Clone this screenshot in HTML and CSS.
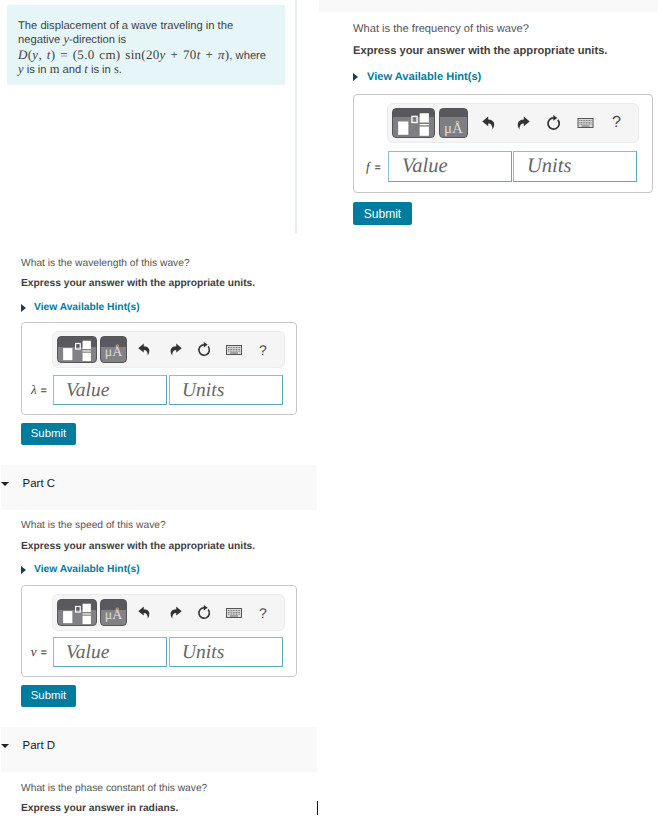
FILE: index.html
```html
<!DOCTYPE html>
<html lang="en">
<head>
  <meta charset="UTF-8">
  <meta name="viewport" content="width=device-width, initial-scale=1.0">
  <title>Wave Problem</title>
  <link rel="stylesheet" href="styles.css">
</head>
<body>

<svg class="sprite" width="0" height="0">
  <symbol id="undo" viewBox="0 0 14 14">
    <path d="M6.2 0.6 L0.3 5.6 L6.2 10.2 V7.6 C9 7.6 10.4 9.4 10.6 13.4 C13.8 8.4 12.4 3.7 6.2 3.5 Z"/>
  </symbol>
  <symbol id="redo" viewBox="0 0 14 14">
    <path d="M7.8 0.6 L13.7 5.6 L7.8 10.2 V7.6 C5 7.6 3.6 9.4 3.4 13.4 C0.2 8.4 1.6 3.7 7.8 3.5 Z"/>
  </symbol>
  <symbol id="reset" viewBox="0 0 16 16">
    <path d="M11.9 4.9 A5.6 5.6 0 1 1 7.6 2.9" fill="none" stroke="currentColor" stroke-width="1.7"/>
    <path d="M7.2 0 L11.4 3 L7.2 5.8 Z"/>
  </symbol>
  <symbol id="keyboard" viewBox="0 0 16 10">
    <rect x="0.5" y="0.5" width="15" height="9" fill="#dcdcdc" stroke="#555"/>
    <path d="M2 2.5 H14 M2 4.4 H14 M2 6.1 H14" stroke="#666" stroke-width="0.9" stroke-dasharray="1 0.6"/>
    <path d="M4 8 H12" stroke="#666"/>
  </symbol>
  <symbol id="template" viewBox="0 0 40 27">
    <rect x="5" y="12" width="10" height="13" fill="#fff"/>
    <rect x="18.5" y="7" width="5" height="6" fill="none" stroke="#fff" stroke-width="1.3"/>
    <rect x="26" y="4" width="9" height="9" fill="#fff"/>
    <rect x="26" y="14.5" width="9" height="1.2" fill="#fff"/>
    <rect x="26" y="17" width="9" height="9" fill="#fff"/>
  </symbol>
</svg>

<div class="page">
  <div class="col-left">
    <div class="intro-wrap">
      <div class="intro">
        The displacement of a wave traveling in the<br>negative <i class="math">y</i>-direction is<br>
        <span class="math formula"><i>D</i>(<i>y</i>, <i>t</i>) = (5.0 cm) sin(20<i>y</i> + 70<i>t</i> + <i>π</i>)</span>, where<br>
        <i class="math">y</i> is in <span class="math">m</span> and <i class="math">t</i> is in <span class="math">s</span>.
      </div>
    </div>

    <div class="question">
      <p class="q-text">What is the wavelength of this wave?</p>
      <p class="q-note">Express your answer with the appropriate units.</p>
      <p class="hint"><span class="hint-arrow"></span>View Available Hint(s)</p>
      <div class="answer">
        <div class="toolbar">
          <span class="tool-btn tool-template"><svg><use href="#template"/></svg></span>
          <span class="tool-btn tool-units">μÅ</span>
          <svg class="icon icon-undo"><use href="#undo"/></svg>
          <svg class="icon icon-redo"><use href="#redo"/></svg>
          <svg class="icon icon-reset"><use href="#reset"/></svg>
          <svg class="icon icon-keys"><use href="#keyboard"/></svg>
          <span class="help">?</span>
        </div>
        <div class="input-row">
          <span class="symbol"><i class="math">λ</i> =</span>
          <span class="field">Value</span>
          <span class="field">Units</span>
        </div>
      </div>
      <button class="submit">Submit</button>
    </div>

    <div class="part"><span class="part-arrow"></span>Part C</div>

    <div class="question q-tight">
      <p class="q-text">What is the speed of this wave?</p>
      <p class="q-note">Express your answer with the appropriate units.</p>
      <p class="hint"><span class="hint-arrow"></span>View Available Hint(s)</p>
      <div class="answer">
        <div class="toolbar">
          <span class="tool-btn tool-template"><svg><use href="#template"/></svg></span>
          <span class="tool-btn tool-units">μÅ</span>
          <svg class="icon icon-undo"><use href="#undo"/></svg>
          <svg class="icon icon-redo"><use href="#redo"/></svg>
          <svg class="icon icon-reset"><use href="#reset"/></svg>
          <svg class="icon icon-keys"><use href="#keyboard"/></svg>
          <span class="help">?</span>
        </div>
        <div class="input-row">
          <span class="symbol"><i class="math">v</i> =</span>
          <span class="field">Value</span>
          <span class="field">Units</span>
        </div>
      </div>
      <button class="submit">Submit</button>
    </div>

    <div class="part part-last"><span class="part-arrow"></span>Part D</div>

    <div class="question">
      <p class="q-text">What is the phase constant of this wave?</p>
      <p class="q-note">Express your answer in radians.</p>
      <span class="caret"></span>
    </div>
  </div>

  <div class="col-right">
    <div class="top-band"></div>
    <div class="question">
      <p class="q-text">What is the frequency of this wave?</p>
      <p class="q-note">Express your answer with the appropriate units.</p>
      <p class="hint"><span class="hint-arrow"></span>View Available Hint(s)</p>
      <div class="answer">
        <div class="toolbar">
          <span class="tool-btn tool-template"><svg><use href="#template"/></svg></span>
          <span class="tool-btn tool-units">μÅ</span>
          <svg class="icon icon-undo"><use href="#undo"/></svg>
          <svg class="icon icon-redo"><use href="#redo"/></svg>
          <svg class="icon icon-reset"><use href="#reset"/></svg>
          <svg class="icon icon-keys"><use href="#keyboard"/></svg>
          <span class="help">?</span>
        </div>
        <div class="input-row">
          <span class="symbol"><i class="math">f</i> =</span>
          <span class="field">Value</span>
          <span class="field">Units</span>
        </div>
      </div>
      <button class="submit">Submit</button>
    </div>
  </div>
</div>

</body>
</html>
```

FILE: styles.css
```css
body {
  margin: 0;
  font-family: "Liberation Sans", Arial, sans-serif;
  color: #3f3f3f;
  background-color: white;
  text-rendering: geometricPrecision;
  overflow: hidden;
}

p {
  margin: 0;
}

.sprite {
  position: absolute;
}

.page {
  display: grid;
  grid-template-columns: 319px 339px;
  height: 834px;
  overflow: hidden;
}

.math {
  font-family: "Liberation Serif", "Times New Roman", serif;
  font-size: 12.5px;
  line-height: 1;
}

.formula {
  font-size: 13px;
  letter-spacing: 0.3px;
  word-spacing: 1.3px;
}

/* left column */
.intro-wrap {
  width: 295px;
  height: 228px;
  padding-top: 5px;
  border-right: 2px solid #e6ecf5;
  margin-bottom: 24px;
}

.intro {
  width: 256px;
  height: 66px;
  margin-left: 7px;
  padding: 14px 11px 0;
  font-size: 11.2px;
  line-height: 14.4px;
  white-space: nowrap;
  background-color: #e6f6f8;
}

.question {
  position: relative;
  padding-left: 21px;
}

.q-text {
  font-size: 10.25px;
  line-height: 14px;
  color: #555;
}

.q-note {
  margin-top: 6px;
  font-size: 10.25px;
  line-height: 14px;
  font-weight: bold;
}

.hint {
  display: flex;
  align-items: center;
  margin-top: 10px;
  font-size: 10.25px;
  line-height: 14px;
  font-weight: bold;
  color: #007c9e;
}

.hint-arrow {
  width: 0;
  height: 0;
  margin-right: 8px;
  border-left: 5px solid #14405a;
  border-top: 4px solid transparent;
  border-bottom: 4px solid transparent;
}

.answer {
  width: 274px;
  height: 91px;
  margin-top: 7px;
  border: 1px solid #c8c8c8;
  border-radius: 4px;
}

.toolbar {
  display: flex;
  align-items: center;
  width: 231px;
  height: 35px;
  margin: 8px 0 0 30px;
  border: 1px solid #ececec;
  border-radius: 6px;
  background-color: #f5f5f5;
}

.tool-btn {
  display: block;
  height: 27px;
  border: 1px solid #555;
  border-radius: 4px;
  box-sizing: border-box;
  background: linear-gradient(#5a5a5e 0, #5a5a5e 42%, #828286 42%, #828286 100%);
}

.tool-template {
  width: 40px;
  margin-left: 4px;
}

.tool-template svg {
  display: block;
  width: 38px;
  height: 25px;
}

.tool-units {
  width: 27px;
  margin-left: 3px;
  font-family: "Liberation Serif", serif;
  font-size: 14px;
  line-height: 31px;
  text-align: center;
  color: #ddd;
  overflow: hidden;
}

.icon {
  display: block;
  fill: #333;
  color: #333;
}

.icon-undo,
.icon-redo {
  width: 13px;
  height: 13px;
}

.icon-undo {
  margin-left: 11px;
}

.icon-redo {
  margin-left: 18px;
}

.icon-reset {
  width: 15px;
  height: 15px;
  margin-left: 15px;
}

.icon-keys {
  width: 16px;
  height: 10px;
  margin-left: 14px;
}

.help {
  margin-left: 17px;
  font-size: 14px;
  color: #444;
}

.input-row {
  display: flex;
  align-items: center;
  margin-top: 7px;
}

.symbol {
  width: 31px;
  padding-right: 6px;
  box-sizing: border-box;
  font-size: 11px;
  word-spacing: 1px;
  text-align: right;
}

.symbol .math {
  font-size: 13px;
}

.field {
  width: 114px;
  height: 30px;
  margin-right: 2px;
  box-sizing: border-box;
  padding-left: 12px;
  border: 1px solid #5aa9c0;
  border-top-color: #86bfd1;
  border-left-color: #86bfd1;
  font-family: "Liberation Serif", serif;
  font-style: italic;
  font-size: 19.5px;
  line-height: 29px;
  color: #666;
}

.submit {
  display: block;
  width: 55px;
  height: 22px;
  margin-top: 8px;
  padding: 0 0 2px;
  font-family: inherit;
  font-size: 11.4px;
  color: white;
  background-color: #007c9e;
  border: none;
  border-radius: 2px;
}

.part {
  display: flex;
  align-items: center;
  width: 316px;
  height: 45px;
  margin: 20px 0 9px 1px;
  padding-bottom: 7px;
  box-sizing: border-box;
  font-size: 11.5px;
  color: #222;
  background-color: #f9f9f9;
}

.part-last {
  margin-bottom: 10px;
}

.part-arrow {
  width: 0;
  height: 0;
  margin-right: 13.5px;
  border-top: 4px solid #222;
  border-left: 4px solid transparent;
  border-right: 4px solid transparent;
}

.q-tight .q-note {
  margin-top: 7px;
}

.q-tight .hint {
  margin-top: 9px;
}

.q-tight .answer {
  height: 90px;
  margin-top: 8px;
}

.q-tight .input-row {
  margin-top: 6px;
}

.caret {
  position: absolute;
  left: 317px;
  top: 19px;
  width: 1px;
  height: 14px;
  background-color: #111;
}

/* right column, drawn a bit larger */
.top-band {
  height: 12px;
  margin-bottom: 10px;
  background-color: #f9f9f9;
}

.col-right .question {
  padding-left: 34px;
}

.col-right .q-text {
  font-size: 11.15px;
}

.col-right .q-note {
  margin-top: 8px;
  font-size: 11.15px;
}

.col-right .hint {
  margin-top: 12px;
  font-size: 11.1px;
}

.col-right .hint-arrow {
  margin-right: 9px;
}

.col-right .answer {
  width: 298px;
  height: 97px;
  margin-top: 10px;
}

.col-right .toolbar {
  width: 250px;
  height: 38px;
  margin: 8px 0 0 33px;
}

.col-right .tool-btn {
  height: 30px;
  background: linear-gradient(#59595d 0, #59595d 28%, #7f7f83 28%, #7f7f83 100%);
}

.col-right .tool-template {
  width: 43px;
  margin-left: 4px;
}

.col-right .tool-template svg {
  width: 41px;
  height: 28px;
}

.col-right .tool-units {
  width: 29px;
  margin-left: 4px;
  line-height: 41px;
  font-size: 15px;
}

.col-right .icon-undo,
.col-right .icon-redo {
  width: 14px;
  height: 14px;
}

.col-right .icon-undo {
  margin-left: 14px;
}

.col-right .icon-redo {
  margin-left: 20px;
}

.col-right .icon-reset {
  width: 16px;
  height: 16px;
  margin-left: 16px;
}

.col-right .icon-keys {
  width: 17px;
  height: 10px;
  margin-left: 15px;
}

.col-right .help {
  margin-left: 18px;
  font-size: 16px;
}

.col-right .input-row {
  margin-top: 8px;
}

.col-right .symbol {
  width: 34px;
  padding-right: 7px;
  word-spacing: 2px;
}

.col-right .field {
  width: 124px;
  height: 31px;
  margin-right: 1px;
  padding-left: 13px;
  font-size: 20.5px;
}

.col-right .submit {
  width: 59px;
  height: 23px;
  margin-top: 9px;
  padding: 0;
  font-size: 12px;
}
```
